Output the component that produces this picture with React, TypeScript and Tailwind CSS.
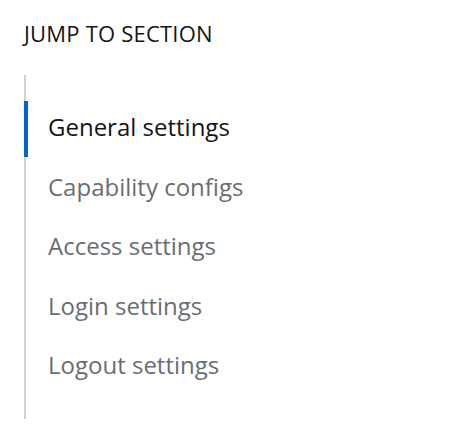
const sections = [
  "General settings",
  "Capability configs",
  "Access settings",
  "Login settings",
  "Logout settings",
];

export default function App() {
  const active = 0;

  return (
    <div className="w-[474px] h-[440px] bg-white pl-6 pt-[18px] font-['Open_Sans','Noto_Sans',sans-serif]">
      <h2 className="text-[22px] leading-[30px] tracking-[0.2px] text-[#151515]">JUMP TO SECTION</h2>

      <ul className="mt-[27px] w-fit border-l-2 border-[#d2d2d2] pt-[26px] pb-[24px] flex flex-col gap-[3.5px]">
        {sections.map((label, i) => (
          <li key={label} className="relative h-[56px] flex items-center pl-[22px] pr-6 pb-[4px]">
            {i === active && (
              <span className="absolute -left-[2px] top-0 bottom-0 w-[4px] bg-[#0066cc]" />
            )}
            <a
              href="#"
              className={
                i === active
                  ? "text-[24px] leading-[32px] text-[#151515] whitespace-nowrap"
                  : "text-[24px] leading-[32px] text-[#6a6e73] whitespace-nowrap"
              }
            >
              {label}
            </a>
          </li>
        ))}
      </ul>
    </div>
  );
}
